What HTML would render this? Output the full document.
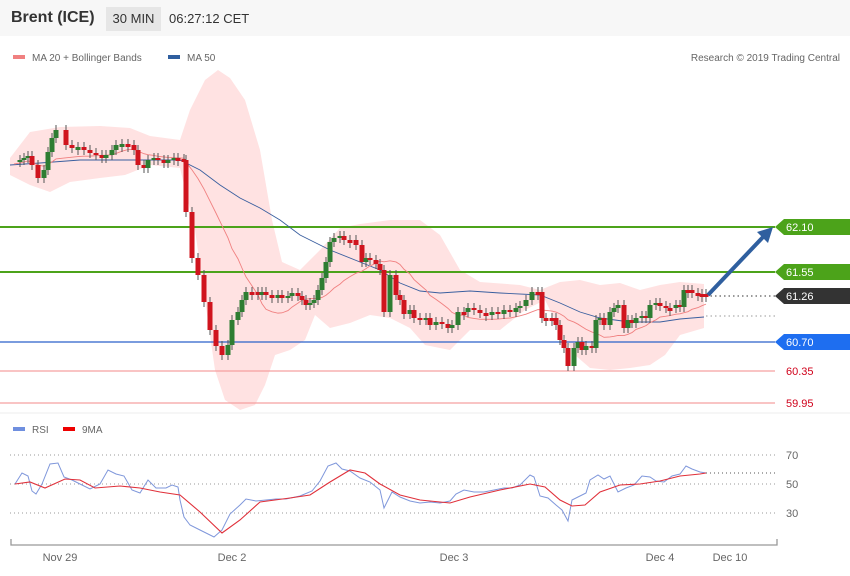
<!DOCTYPE html>
<html><head><meta charset="utf-8"><style>
html,body{margin:0;padding:0;background:#fff;}
body{width:850px;height:576px;overflow:hidden;font-family:"Liberation Sans","DejaVu Sans",sans-serif;position:relative;}
.hdr{position:absolute;left:0;top:0;width:850px;height:36px;background:#f7f7f7;}
.t1{position:absolute;left:11px;top:9px;font-weight:bold;font-size:16px;color:#333;}
.t2{position:absolute;left:106px;top:7px;width:55px;height:24px;background:#e6e6e6;font-size:13px;color:#333;line-height:24px;text-align:center;}
.t3{position:absolute;left:169px;top:11px;font-size:13px;color:#333;}
svg{position:absolute;left:0;top:0;}
</style></head><body>
<div class="hdr"></div>
<div class="t1">Brent (ICE)</div><div class="t2">30 MIN</div><div class="t3">06:27:12 CET</div>
<svg id="s" width="850" height="576" xmlns="http://www.w3.org/2000/svg" font-family="Liberation Sans, DejaVu Sans, sans-serif">
<rect x="13" y="55" width="12" height="4" fill="#f08080"/>
<text x="32" y="61" font-size="10" fill="#666">MA 20 + Bollinger Bands</text>
<rect x="168" y="55" width="12" height="4" fill="#2f5f9f"/>
<text x="187" y="61" font-size="10" fill="#666">MA 50</text>
<text x="840" y="61" font-size="10" fill="#666" text-anchor="end">Research © 2019 Trading Central</text>
<g id="band"></g>
<line x1="0" y1="227" x2="775" y2="227" stroke="#4ca31a" stroke-width="2"/>
<line x1="0" y1="272" x2="775" y2="272" stroke="#4ca31a" stroke-width="2"/>
<line x1="0" y1="342" x2="775" y2="342" stroke="#2a62c9" stroke-width="1.3"/>
<line x1="0" y1="371" x2="775" y2="371" stroke="#f5a0a0" stroke-width="1.3"/>
<line x1="0" y1="403" x2="775" y2="403" stroke="#f5a0a0" stroke-width="1.3"/>
<line x1="706" y1="296" x2="775" y2="296" stroke="#333" stroke-dasharray="1.5,3"/>
<line x1="706" y1="316" x2="775" y2="316" stroke="#999" stroke-dasharray="1.5,3"/>
<g id="cand"></g>
<line x1="708" y1="295" x2="764" y2="236" stroke="#2f5f9f" stroke-width="4"/>
<polygon points="773,227 757,232 768,243" fill="#2f5f9f"/>
<polygon points="775,227 784,219 850,219 850,235 784,235" fill="#4ca31a"/>
<text x="786" y="231" font-size="11" fill="#fff">62.10</text>
<polygon points="775,272 784,264 850,264 850,280 784,280" fill="#4ca31a"/>
<text x="786" y="276" font-size="11" fill="#fff">61.55</text>
<polygon points="775,296 784,288 850,288 850,304 784,304" fill="#333"/>
<text x="786" y="300" font-size="11" fill="#fff">61.26</text>
<polygon points="775,342 784,334 850,334 850,350 784,350" fill="#1e6ef0"/>
<text x="786" y="346" font-size="11" fill="#fff">60.70</text>
<text x="786" y="375" font-size="11" fill="#d0021b">60.35</text>
<text x="786" y="407" font-size="11" fill="#d0021b">59.95</text>
<line x1="0" y1="413" x2="850" y2="413" stroke="#eee"/>
<rect x="13" y="427" width="12" height="4" fill="#6f8fdf"/>
<text x="32" y="433" font-size="10" fill="#666">RSI</text>
<rect x="63" y="427" width="12" height="4" fill="#e00"/>
<text x="82" y="433" font-size="10" fill="#666">9MA</text>
<line x1="10" y1="455" x2="777" y2="455" stroke="#999" stroke-dasharray="1,3"/>
<line x1="10" y1="484" x2="777" y2="484" stroke="#999" stroke-dasharray="1,3"/>
<line x1="10" y1="513" x2="777" y2="513" stroke="#999" stroke-dasharray="1,3"/>
<line x1="706" y1="473" x2="777" y2="473" stroke="#555" stroke-dasharray="1,3"/>
<text x="786" y="459" font-size="11" fill="#666">70</text>
<text x="786" y="488" font-size="11" fill="#666">50</text>
<text x="786" y="517" font-size="11" fill="#666">30</text>
<g id="rsi"></g>
<path d="M11 539 V545 H777 V539" fill="none" stroke="#999" stroke-width="1.3"/>
<text x="60" y="561" font-size="11" fill="#666" text-anchor="middle">Nov 29</text>
<text x="232" y="561" font-size="11" fill="#666" text-anchor="middle">Dec 2</text>
<text x="454" y="561" font-size="11" fill="#666" text-anchor="middle">Dec 3</text>
<text x="660" y="561" font-size="11" fill="#666" text-anchor="middle">Dec 4</text>
<text x="730" y="561" font-size="11" fill="#666" text-anchor="middle">Dec 10</text>
</svg>
<script>
(function(){
var NS="http://www.w3.org/2000/svg";
function el(p,t,a){var e=document.createElementNS(NS,t);for(var k in a)e.setAttribute(k,a[k]);p.appendChild(e);return e;}
function pts(a){return a.map(function(p){return p[0]+","+p[1]}).join(" ");}
var up=[[10,158],[30,132],[60,127],[100,126],[130,128],[150,136],[180,140],[190,110],[205,80],[218,70],[230,78],[245,100],[260,150],[272,220],[282,262],[300,270],[320,250],[340,228],[360,224],[390,220],[420,220],[440,235],[460,270],[480,282],[520,285],[540,290],[560,282],[580,280],[600,285],[620,283],[640,290],[660,285],[680,282],[704,284]];
var lo=[[10,175],[30,185],[50,192],[70,182],[100,178],[125,175],[150,165],[180,168],[195,230],[205,300],[215,370],[225,400],[240,410],[255,405],[265,385],[275,355],[290,350],[305,340],[315,315],[330,328],[350,323],[370,315],[390,318],[410,328],[425,345],[450,350],[470,330],[500,330],[525,310],[545,300],[560,330],[575,355],[590,368],[610,370],[630,368],[650,365],[665,355],[680,335],[704,328]];
var band=document.getElementById("band");
el(band,"polygon",{points:pts(up.concat(lo.slice().reverse())),fill:"#ffe2e2"});
var c=[[14,162],[20,160],[24,158],[28,156],[32,165],[38,178],[44,170],[48,152],[52,138],[56,130],[66,145],[72,148],[78,147],[84,150],[90,153],[96,155],[102,156],[106,155],[112,150],[116,145],[122,144],[128,145],[134,150],[138,165],[144,168],[148,160],[154,158],[158,160],[164,161],[168,160],[174,158],[178,159],[184,160],[186,212],[192,258],[198,275],[204,302],[210,330],[216,346],[222,355],[228,345],[232,320],[238,312],[242,300],[246,292],[252,292],[258,295],[262,292],[266,295],[272,296],[278,295],[282,298],[288,296],[292,293],[298,296],[302,300],[306,305],[310,303],[314,300],[318,290],[322,278],[326,262],[330,242],[334,238],[340,236],[344,240],[350,240],[356,245],[362,262],[366,258],[370,260],[376,264],[380,270],[384,312],[390,275],[396,295],[400,300],[404,314],[410,310],[414,318],[420,320],[426,318],[430,325],[436,322],[442,324],[448,328],[452,325],[458,312],[464,312],[468,308],[474,310],[480,313],[486,313],[492,312],[498,314],[504,310],[510,312],[516,308],[520,306],[526,300],[532,292],[538,292],[542,318],[546,318],[552,318],[556,325],[560,340],[564,348],[568,366],[574,348],[578,342],[582,350],[586,346],[592,348],[596,320],[600,318],[604,325],[610,312],[614,308],[618,305],[624,328],[628,320],[632,323],[636,318],[642,316],[646,318],[650,305],[656,303],[660,306],[666,308],[670,308],[676,305],[680,307],[684,290],[688,290],[692,293],[698,294],[702,294],[706,295]];
var g=document.getElementById("cand");
var ma=[];for(var i=0;i<c.length;i++){var s=0,n=0;for(var j=Math.max(0,i-14);j<=i;j++){s+=c[j][1];n++;}ma.push([c[i][0],s/n+2]);}
var m50=[[10,165],[40,163],[80,160],[130,160],[180,160],[200,170],[220,185],[240,198],[260,208],[280,220],[300,235],[330,250],[360,262],[380,270],[400,283],[420,291],[440,293],[470,291],[500,293],[540,295],[560,303],[580,312],[600,318],[630,322],[660,322],[680,319],[704,317]];
el(g,"polyline",{points:pts(m50),fill:"none",stroke:"#3a5f9f","stroke-width":0.9});
el(g,"polyline",{points:pts(ma),fill:"none",stroke:"#f08080","stroke-width":0.9});
for(var i=1;i<c.length;i++){var o=c[i-1][1],cl=c[i][1],x=c[i][0];var yt=Math.min(o,cl),yb=Math.max(o,cl);if(yb-yt<2){yb=yt+3;}
var col=cl<o?"#2e7d32":"#d0141e";
el(g,"line",{x1:x,x2:x,y1:yt-5,y2:yb+5,stroke:"#555","stroke-width":1});
el(g,"rect",{x:x-2.5,y:yt,width:5,height:yb-yt,fill:col});}
var r=[[15,484],[22,473],[28,476],[32,491],[36,494],[42,484],[50,464],[58,463],[64,477],[72,480],[80,484],[90,489],[100,484],[108,470],[116,474],[124,476],[132,490],[140,493],[148,480],[156,488],[166,488],[172,485],[178,487],[180,500],[184,517],[190,525],[200,530],[214,537],[222,530],[230,514],[240,505],[246,499],[256,501],[266,500],[276,499],[286,499],[300,496],[312,491],[320,481],[328,466],[336,463],[342,469],[350,471],[360,478],[370,482],[380,490],[384,508],[392,492],[400,497],[410,501],[420,503],[430,502],[440,503],[450,501],[456,494],[464,490],[474,492],[484,492],[494,490],[504,488],[512,488],[520,485],[530,475],[534,477],[540,496],[548,498],[556,505],[562,510],[568,521],[572,500],[578,497],[586,493],[590,480],[598,475],[604,479],[610,476],[618,492],[626,488],[634,485],[642,476],[650,477],[656,481],[664,482],[672,476],[680,474],[686,466],[692,469],[700,472],[706,473]];
var m9=[[15,484],[30,482],[45,488],[65,479],[80,480],[95,488],[120,486],[140,488],[160,492],[180,495],[200,512],[222,533],[240,520],[260,502],[290,498],[310,495],[330,482],[350,470],[365,473],[380,484],[400,495],[420,500],[450,503],[470,497],[500,490],[530,484],[545,487],[560,500],[572,506],[585,505],[600,492],[620,485],[640,484],[660,481],[680,476],[700,474],[706,473]];
var rg=document.getElementById("rsi");
el(rg,"polyline",{points:pts(r),fill:"none",stroke:"#7f97db","stroke-width":1});
el(rg,"polyline",{points:pts(m9),fill:"none",stroke:"#e0303a","stroke-width":1.1});
})();
</script>
</body></html>
